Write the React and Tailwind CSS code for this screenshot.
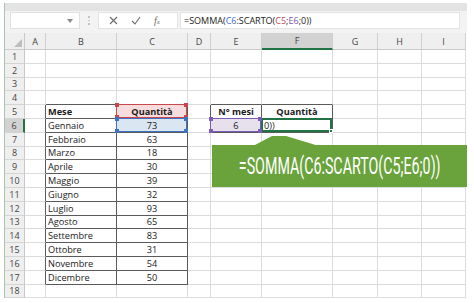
import React from "react";

const COLS = [
  { key: "A", w: "w-[21px]" },
  { key: "B", w: "w-[71px]" },
  { key: "C", w: "w-[71px]" },
  { key: "D", w: "w-[23px]" },
  { key: "E", w: "w-[51px]" },
  { key: "F", w: "w-[71px]" },
  { key: "G", w: "w-[45px]" },
  { key: "H", w: "w-[44px]" },
  { key: "I", w: "w-[44px]" },
];

const months = [
  ["Gennaio", 73],
  ["Febbraio", 63],
  ["Marzo", 18],
  ["Aprile", 30],
  ["Maggio", 39],
  ["Giugno", 32],
  ["Luglio", 93],
  ["Agosto", 65],
  ["Settembre", 83],
  ["Ottobre", 31],
  ["Novembre", 54],
  ["Dicembre", 50],
];

// what goes in a cell: [text, align, bold]
const cellContent = (r, c) => {
  if (r === 5) {
    if (c === 1) return ["Mese", "left", true];
    if (c === 2) return ["Quantità", "center", true];
    if (c === 4) return ["N° mesi", "center", true];
    if (c === 5) return ["Quantità", "center", true];
  }
  if (r >= 6 && r <= 17) {
    const m = months[r - 6];
    if (c === 1) return [m[0], "left", false];
    if (c === 2) return [String(m[1]), "center", false];
  }
  if (r === 6) {
    if (c === 4) return ["6", "center", false];
    if (c === 5) return ["0))", "left", false];
  }
  return null;
};

const Corners = ({ color }) => (
  <>
    <span className={`absolute -left-[2px] -top-[2px] w-[4px] h-[4px] ${color}`} />
    <span className={`absolute -right-[2px] -top-[2px] w-[4px] h-[4px] ${color}`} />
    <span className={`absolute -left-[2px] -bottom-[2px] w-[4px] h-[4px] ${color}`} />
    <span className={`absolute -right-[2px] -bottom-[2px] w-[4px] h-[4px] ${color}`} />
  </>
);

const Cell = ({ r, c, w }) => {
  const rightDark = (c <= 2 && r >= 5 && r <= 17) || (c >= 3 && c <= 5 && r >= 5 && r <= 6);
  const bottomDark = ((c === 1 || c === 2) && r >= 4 && r <= 17) || ((c === 4 || c === 5) && r >= 4 && r <= 6);
  const content = cellContent(r, c);

  let bg = "";
  if (r === 5 && c === 2) bg = "bg-[#f6dcdc]";
  if (r === 6 && c === 2) bg = "bg-[#dbe6f3]";
  if (r === 6 && c === 4) bg = "bg-[#e7e1ee]";

  return (
    <div
      className={`relative ${w} h-full shrink-0 flex items-center border-r border-b ${
        rightDark ? "border-r-[#5a5a5a]" : "border-r-[#dcdcdc]"
      } ${bottomDark ? "border-b-[#5a5a5a]" : "border-b-[#dcdcdc]"} ${bg} ${
        content && content[1] === "center" ? "justify-center" : "justify-start pl-[2px]"
      }`}
    >
      {content && (
        <span className={`relative z-10 text-[9.2px] leading-none text-[#1a1a1a] ${content[2] ? "font-bold" : ""}`}>
          {content[0]}
        </span>
      )}
      {r === 5 && c === 2 && (
        <div className="absolute -left-px -top-px right-0 bottom-0 border border-[#c8474a] z-20">
          <Corners color="bg-[#c8474a]" />
        </div>
      )}
      {r === 6 && c === 2 && (
        <div className="absolute -left-px -top-px right-0 bottom-0 border border-[#3f72c0] z-20">
          <Corners color="bg-[#3f72c0]" />
        </div>
      )}
      {r === 6 && c === 5 && (
        <div className="absolute -left-px -top-px right-0 bottom-0 border-2 border-[#217346] z-10">
          <span className="absolute -right-[3px] -bottom-[3px] w-[4px] h-[4px] bg-[#217346] border border-white" />
        </div>
      )}
      {r === 6 && c === 4 && (
        <div className="absolute -left-px -top-px right-0 bottom-0 border border-[#7b5bb5] z-20">
          <Corners color="bg-[#7b5bb5]" />
        </div>
      )}
    </div>
  );
};

const Row = ({ r }) => (
  <div className="flex h-[13.8px]">
    <div
      className={`w-[20px] h-full shrink-0 flex items-center justify-center text-[9px] leading-none text-[#444] border-b border-[#d4d4d4] ${
        r === 6 ? "bg-[#d2d2d2] border-r-2 border-r-[#217346]" : "bg-[#efefef] border-r border-r-[#c9c9c9]"
      }`}
    >
      {r}
    </div>
    {COLS.map((col, c) => (
      <Cell key={col.key} r={r} c={c} w={col.w} />
    ))}
  </div>
);

export default function App() {
  const rows = Array.from({ length: 18 }, (_, i) => i + 1);

  return (
    <div className="relative w-[474px] h-[303px] bg-white overflow-hidden font-['Open_Sans',sans-serif]">
      <div className="ml-[4px] mt-[3px] w-[463px] border-l border-[#a9c4b0]">
        {/* ribbon edge */}
        <div className="h-[8px] bg-[#e3e3e3]" />

        {/* name box + formula bar */}
        <div className="h-[22px] bg-[#f3f3f3] flex items-start pt-[1px] pl-[5px]">
          <div className="w-[70px] h-[17px] bg-white border border-[#e0e0e0] flex items-center justify-end pr-[6px]">
            <svg width="6" height="4" viewBox="0 0 6 4">
              <polygon points="0,0 6,0 3,4" fill="#8a8a8a" />
            </svg>
          </div>
          <div className="w-[18px] h-[17px] flex flex-col items-center justify-center gap-[2px]">
            <span className="w-[1.5px] h-[1.5px] bg-[#c4c4c4]" />
            <span className="w-[1.5px] h-[1.5px] bg-[#c4c4c4]" />
            <span className="w-[1.5px] h-[1.5px] bg-[#c4c4c4]" />
          </div>
          <div className="w-[80px] h-[17px] bg-white border border-[#e3e3e3] flex items-center pl-[10px] gap-[13px] text-[#6a6a6a]">
            <svg width="9" height="9" viewBox="0 0 9 9">
              <path d="M1 1 L8 8 M8 1 L1 8" stroke="#6a6a6a" strokeWidth="1.1" />
            </svg>
            <svg width="10" height="9" viewBox="0 0 10 9">
              <path d="M1 5 L4 8 L9 1" stroke="#6a6a6a" strokeWidth="1.1" fill="none" />
            </svg>
            <span className="font-['Liberation_Serif',serif] italic text-[10px] leading-none">
              f<span className="text-[7px]">x</span>
            </span>
          </div>
          <div className="ml-[2px] w-[280px] h-[17px] bg-white border border-[#e3e3e3] flex items-center pl-[3px] text-[9px] leading-none text-[#222]">
            <span>=SOMMA(</span>
            <span className="text-[#3b6fc4]">C6</span>
            <span>:SCARTO(</span>
            <span className="text-[#c0504d]">C5</span>
            <span>;</span>
            <span className="text-[#7a56b0]">E6</span>
            <span>;0))</span>
          </div>
        </div>

        {/* column headers */}
        <div className="flex h-[17px]">
          <div className="w-[20px] h-full shrink-0 bg-[#efefef] border-r border-b border-[#c9c9c9] flex items-end justify-end p-[2px]">
            <svg width="8" height="8" viewBox="0 0 8 8">
              <polygon points="8,0 8,8 0,8" fill="#bdbdbd" />
            </svg>
          </div>
          {COLS.map((col) => (
            <div
              key={col.key}
              className={`${col.w} h-full shrink-0 flex items-center justify-center text-[9px] leading-none text-[#444] border-r border-r-[#cfcfcf] ${
                col.key === "F" ? "bg-[#d2d2d2] border-b-2 border-b-[#217346]" : "bg-[#efefef] border-b border-b-[#c9c9c9]"
              }`}
            >
              {col.key}
            </div>
          ))}
        </div>

        {rows.map((r) => (
          <Row key={r} r={r} />
        ))}
      </div>

      {/* green callout */}
      <svg className="absolute left-[253px] top-[136px]" width="66" height="10" viewBox="0 0 66 10">
        <polygon points="0,10 19,0 33,0 66,10" fill="#6aa33c" />
      </svg>
      <div className="absolute left-[212px] top-[145px] w-[255px] h-[42px] bg-[#6aa33c] flex items-center justify-center overflow-hidden">
        <span className="inline-block whitespace-nowrap text-white text-[23px] leading-none font-['Roboto',sans-serif] scale-x-[0.62]">
          =SOMMA(C6:SCARTO(C5;E6;0))
        </span>
      </div>
    </div>
  );
}
